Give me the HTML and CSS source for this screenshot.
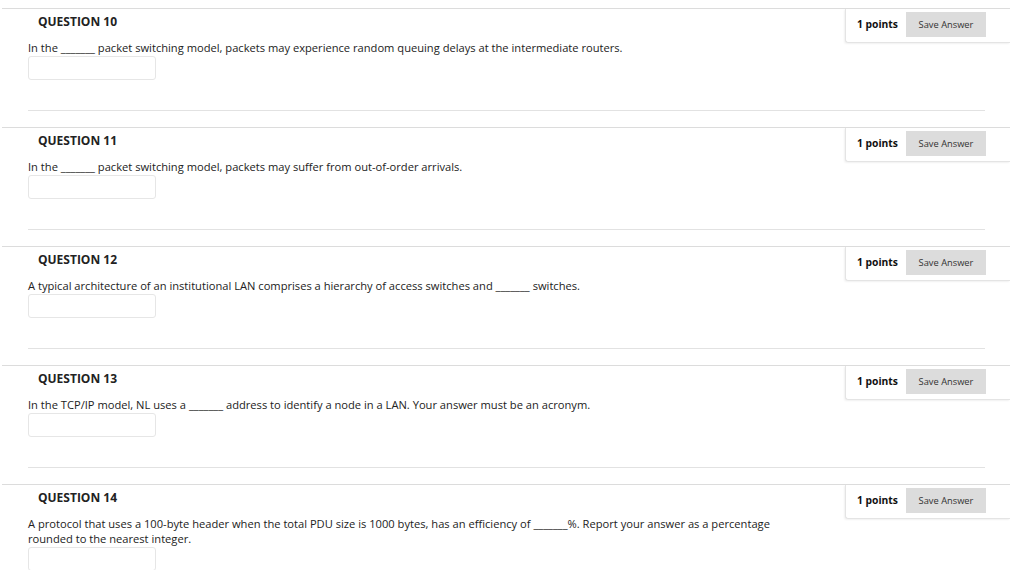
FILE: index.html
```html
<!DOCTYPE html>
<html>
<head>
<meta charset="utf-8">
<link rel="stylesheet" href="styles.css">
</head>
<body>
<div class="page">
  <div class="question">
    <div class="q-head">
      <h3 class="q-title">QUESTION 10</h3>
      <div class="points">
        <span class="pts">1 points</span>
        <button class="save">Save Answer</button>
      </div>
    </div>
    <div class="q-body">
      <p class="q-text">In the _______ packet switching model, packets may experience random queuing delays at the intermediate routers.</p>
      <input class="answer" type="text">
      <div class="q-sep"></div>
    </div>
  </div>

  <div class="question">
    <div class="q-head">
      <h3 class="q-title">QUESTION 11</h3>
      <div class="points">
        <span class="pts">1 points</span>
        <button class="save">Save Answer</button>
      </div>
    </div>
    <div class="q-body">
      <p class="q-text">In the _______ packet switching model, packets may suffer from out-of-order arrivals.</p>
      <input class="answer" type="text">
      <div class="q-sep"></div>
    </div>
  </div>

  <div class="question">
    <div class="q-head">
      <h3 class="q-title">QUESTION 12</h3>
      <div class="points">
        <span class="pts">1 points</span>
        <button class="save">Save Answer</button>
      </div>
    </div>
    <div class="q-body">
      <p class="q-text">A typical architecture of an institutional LAN comprises a hierarchy of access switches and _______ switches.</p>
      <input class="answer" type="text">
      <div class="q-sep"></div>
    </div>
  </div>

  <div class="question">
    <div class="q-head">
      <h3 class="q-title">QUESTION 13</h3>
      <div class="points">
        <span class="pts">1 points</span>
        <button class="save">Save Answer</button>
      </div>
    </div>
    <div class="q-body">
      <p class="q-text">In the TCP/IP model, NL uses a _______ address to identify a node in a LAN. Your answer must be an acronym.</p>
      <input class="answer" type="text">
      <div class="q-sep"></div>
    </div>
  </div>

  <div class="question">
    <div class="q-head">
      <h3 class="q-title">QUESTION 14</h3>
      <div class="points">
        <span class="pts">1 points</span>
        <button class="save">Save Answer</button>
      </div>
    </div>
    <div class="q-body">
      <p class="q-text wrap">A protocol that uses a 100-byte header when the total PDU size is 1000 bytes, has an efficiency of _______%. Report your answer as a percentage rounded to the nearest integer.</p>
      <input class="answer" type="text">
      <div class="q-sep"></div>
    </div>
  </div>
</div>
</body>
</html>
```

FILE: styles.css
```css
* { box-sizing: border-box; }

html, body {
  margin: 0;
  padding: 0;
  background: #ffffff;
  overflow: hidden;
}

body {
  font-family: "Open Sans", "Noto Sans", "Liberation Sans", sans-serif;
  color: #222222;
  height: 570px;
}

.page {
  padding-top: 8px;
  width: 1008px;
  margin-left: 2px;
}

.question {
  border-top: 1px solid #dcdcdc;
  margin-bottom: 16px;
}

.q-head {
  display: flex;
  justify-content: space-between;
  align-items: flex-start;
  height: 31px;
}

.q-title {
  margin: 0;
  padding: 5px 0 0 36px;
  font-size: 12px;
  line-height: 15px;
  font-weight: 700;
  color: #222222;
}

.points {
  flex: none;
  display: flex;
  align-items: center;
  width: 165px;
  height: 34px;
  padding: 3px 24px 6px 11px;
  border-left: 1px solid #e4e4e4;
  border-bottom: 1px solid #e4e4e4;
  border-bottom-left-radius: 3px;
  box-shadow: -1px 1px 2px rgba(0, 0, 0, 0.06);
  background: #ffffff;
  position: relative;
  z-index: 1;
}

.pts {
  font-size: 10.3px;
  font-weight: 700;
  color: #111111;
  white-space: nowrap;
}

.save {
  width: 80px;
  height: 25px;
  border: none;
  background: #dcdcdc;
  color: #333333;
  font-family: "Open Sans", "Noto Sans", sans-serif;
  font-size: 9.3px;
  padding: 0;
  margin-left: auto;
}

.q-body {
  padding-left: 26px;
  padding-right: 25px;
}

.q-text {
  margin: 0;
  font-size: 11.15px;
  line-height: 15px;
  color: #222222;
}

.q-text.wrap {
  max-width: 762px;
}

.answer {
  display: block;
  margin-top: 1px;
  width: 128px;
  height: 24px;
  border: 1px solid #e6e6e6;
  border-radius: 3px;
  background: #ffffff;
  outline: none;
}

.q-sep {
  margin-top: 30px;
  height: 1px;
  background: #e2e2e2;
}
```
